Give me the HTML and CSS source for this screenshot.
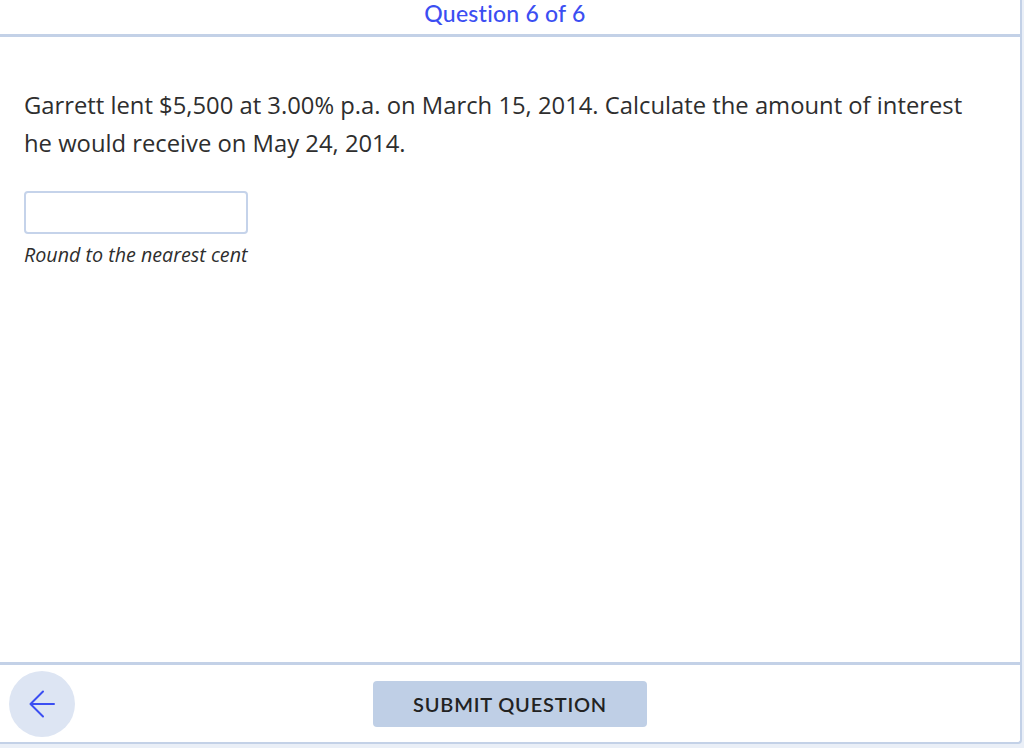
FILE: index.html
```html
<!DOCTYPE html>
<html lang="en">
<head>
<meta charset="utf-8" />
<meta name="viewport" content="width=device-width,initial-scale=1" />
<title>Question 6 of 6</title>
<link rel="stylesheet" href="styles.css">
</head>
<body>

<div class="quiz">
  <!-- ===== header ===== -->
  <header class="quizHead">
    <h2>Question 6 of 6</h2>
  </header>

  <!-- ===== question ===== -->
  <main class="quizBody">
    <p class="prompt">Garrett lent $5,500 at 3.00% p.a. on March 15, 2014. Calculate the amount of interest he would receive on May 24, 2014.</p>
    <input class="answer" type="text" aria-label="Answer">
    <p class="hint">Round to the nearest cent</p>
  </main>

  <!-- ===== footer nav ===== -->
  <footer class="quizFoot">
    <button class="back" aria-label="Previous question">
      <svg width="26" height="28" viewBox="0 0 26 28" fill="none" stroke="currentColor" stroke-width="2" stroke-linecap="round" stroke-linejoin="round"><path d="M25 14H1.5M14 1.5 1.5 14 14 26.5"/></svg>
    </button>
    <button class="submit">SUBMIT QUESTION</button>
  </footer>
</div>

</body>
</html>
```

FILE: styles.css
```css
/* ===== base ===== */
:root{
  --line:#c3d1e7;
  --blue:#3b4ef2;
  --ink:#2e2e2e;
}
*{box-sizing:border-box}
html,body{margin:0;background:#eaeff7;color:var(--ink);font:400 16px/1.5 "Open Sans", "Liberation Sans", sans-serif}

/* ===== card ===== */
.quiz{
  width:1022px; height:744px;
  display:flex; flex-direction:column;
  background:#fff;
  border-right:2px solid var(--line);
  border-bottom:2px solid var(--line);
  border-bottom-right-radius:4px;
}

.quizHead{
  height:37px;
  padding-right:10px;
  border-bottom:3px solid var(--line);
  text-align:center;
}
.quizHead h2{
  margin:0;
  font:500 23px/27px Lato, "Liberation Sans", sans-serif;
  color:var(--blue);
  letter-spacing:.01em;
}

.quizBody{flex:1; padding:49px 24px 0}
.prompt{margin:0; font-size:23.8px; line-height:38px; color:var(--ink)}
.answer{
  display:block;
  width:224px; height:43px;
  margin-top:29px;
  border:2px solid #c5d3ea; border-radius:4px;
  font:inherit;
}
.hint{margin:9px 0 0; font-size:19.7px; font-style:italic; line-height:24px; color:var(--ink)}

.quizFoot{
  height:80px;
  border-top:3px solid var(--line);
  display:flex; align-items:center; justify-content:center;
  position:relative;
}
.back{
  position:absolute; left:9px; top:6px;
  width:66px; height:66px;
  border:0; border-radius:50%;
  background:#dde5f3; color:var(--blue);
  display:grid; place-items:center;
  padding:0;
}
.submit{
  width:274px; height:46px;
  border:0; border-radius:4px;
  background:#bfcfe6; color:#222;
  font:600 20px/1 Lato, "Liberation Sans", sans-serif;
  letter-spacing:.04em;
}
```
